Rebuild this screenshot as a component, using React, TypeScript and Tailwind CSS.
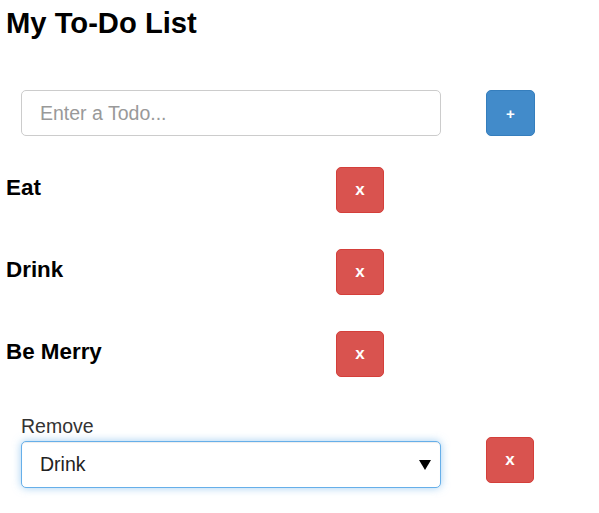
import React from "react";

const items = ["Eat", "Drink", "Be Merry"];

function DangerButton({ className = "" }: { className?: string }) {
  return (
    <button
      type="button"
      className={
        "flex h-[46px] w-[48px] shrink-0 items-center justify-center rounded-[5px] border border-[#d43f3a] bg-[#d9534f] text-[17px] font-bold leading-none text-white " +
        className
      }
    >
      <span className="-mt-[2px]">x</span>
    </button>
  );
}

export default function App() {
  return (
    <div
      className="min-h-screen bg-white px-[6px] text-black"
      style={{ fontFamily: '"Liberation Sans", Arial, Helvetica, sans-serif' }}
    >
      <h1 className="pt-[7px] text-[29.2px] font-bold leading-[1.1]">My To-Do List</h1>

      <div className="mt-[51px] flex items-start pl-[15px]">
        <input
          type="text"
          placeholder="Enter a Todo..."
          className="h-[46px] w-[420px] rounded-[5px] border border-[#cccccc] bg-white px-[18px] text-[19.5px] text-[#555] outline-none placeholder:text-[#999999]"
        />
        <button
          type="button"
          className="ml-[45px] flex h-[46px] w-[49px] items-center justify-center rounded-[5px] border border-[#357ebd] bg-[#428bca] text-[15px] font-bold leading-none text-white"
        >
          +
        </button>
      </div>

      <div className="mt-[31px] flex flex-col gap-[36px]">
        {items.map((t) => (
          <div key={t} className="flex h-[46px] items-center">
            <div className="-mt-[4px] w-[330px] text-[22.4px] font-bold leading-[1.1]">{t}</div>
            <DangerButton />
          </div>
        ))}
      </div>

      <div className="mt-[38px] flex items-start pl-[15px]">
        <div className="flex w-[420px] flex-col">
          <label className="text-[19.5px] leading-[22px] text-[#333]">Remove</label>
          <div className="relative mt-[4px]">
            <select
              defaultValue="Drink"
              className="h-[47px] w-[420px] appearance-none rounded-[5px] border border-[#66afe9] bg-white px-[18px] text-[19.5px] text-[#222] shadow-[inset_0_1px_1px_rgba(0,0,0,0.075),0_0_8px_rgba(102,175,233,0.6)] outline-none"
            >
              {items.map((t) => (
                <option key={t} value={t}>
                  {t}
                </option>
              ))}
            </select>
            <svg
              className="pointer-events-none absolute right-[10px] top-[19px]"
              width="12"
              height="10"
              viewBox="0 0 12 10"
            >
              <polygon points="0,0 12,0 6,10" fill="#000" />
            </svg>
          </div>
        </div>
        <DangerButton className="ml-[45px] mt-[22px]" />
      </div>
    </div>
  );
}
